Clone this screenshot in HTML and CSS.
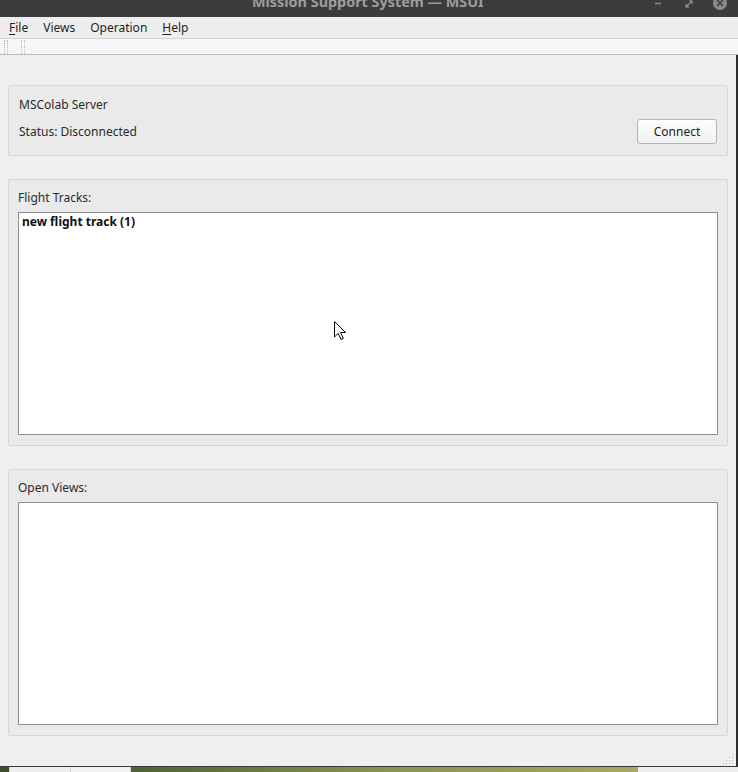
FILE: index.html
```html
<!DOCTYPE html>
<html lang="en">
<head>
  <meta charset="UTF-8" />
  <title>Mission Support System — MSUI</title>
  <link rel="stylesheet" href="styles.css">
</head>
<body>
  <div class="window">
    <div class="titlebar">
      <span class="title">Mission Support System — MSUI</span>
      <svg class="win-btn win-min" width="10" height="8" viewBox="0 0 10 8"><path d="M2 3.5h6" stroke="#8a8a8a" stroke-width="1.5"/></svg>
      <svg class="win-btn win-max" width="12" height="8" viewBox="0 0 12 8"><path d="M3 7l6-6M6 1h3v3M3 4v3h3" stroke="#8a8a8a" stroke-width="1.3" fill="none"/></svg>
      <svg class="win-btn win-close" width="16" height="12" viewBox="0 0 16 12"><circle cx="8" cy="3" r="7" fill="#8a8a8a"/><path d="M5 0l6 6M11 0l-6 6" stroke="#3c3c3c" stroke-width="1.6"/></svg>
    </div>

    <nav class="menubar">
      <span class="menu-item"><u>F</u>ile</span>
      <span class="menu-item">Views</span>
      <span class="menu-item">Operation</span>
      <span class="menu-item"><u>H</u>elp</span>
    </nav>

    <div class="toolbar">
      <span class="handle"></span>
      <span class="handle"></span>
    </div>

    <main class="content">
      <section class="group server-group">
        <div class="server-title">MSColab Server</div>
        <div class="status-row">
          <span>Status: Disconnected</span>
          <button class="btn">Connect</button>
        </div>
      </section>

      <section class="group list-group">
        <div class="group-label">Flight Tracks:</div>
        <ul class="list">
          <li class="list-item active">new flight track (1)</li>
        </ul>
      </section>

      <section class="group list-group">
        <div class="group-label">Open Views:</div>
        <ul class="list"></ul>
      </section>

      <!-- size grip -->
      <svg class="grip" width="12" height="12" viewBox="0 0 12 12" fill="#b4b4b4">
        <rect x="9" y="1" width="1" height="1"/>
        <rect x="6" y="4" width="1" height="1"/><rect x="9" y="4" width="1" height="1"/>
        <rect x="3" y="7" width="1" height="1"/><rect x="6" y="7" width="1" height="1"/><rect x="9" y="7" width="1" height="1"/>
        <rect x="0" y="10" width="1" height="1"/><rect x="3" y="10" width="1" height="1"/><rect x="6" y="10" width="1" height="1"/><rect x="9" y="10" width="1" height="1"/>
      </svg>
    </main>
  </div>

  <div class="desktop">
    <span class="dk dk-edge"></span>
    <span class="dk dk-box"></span>
    <span class="dk dk-light"></span>
    <span class="dk dk-wall"></span>
    <span class="dk dk-right"></span>
  </div>

  <!-- mouse pointer -->
  <svg class="cursor" width="13" height="20" viewBox="0 0 13 20">
    <path d="M0.5 0.5V16L4.2 12.3L7 18.5L9.3 17.5L6.6 11.5H11.5Z" fill="#fff" stroke="#000" stroke-width="1" stroke-linejoin="round"/>
  </svg>
</body>
</html>
```

FILE: styles.css
```css
body {
  margin: 0;
  width: 738px;
  height: 772px;
  overflow: hidden;
  position: relative;
  background: #2c2c2c;
  font-family: "Noto Sans", "DejaVu Sans", sans-serif;
  font-size: 12px;
  color: #2b2b2b;
}

.window {
  display: flex;
  flex-direction: column;
  height: 767px;
  background: #efefef;
  border-bottom: 1px solid #3a3a3a;
  box-sizing: border-box;
}

/* Title bar */
.titlebar {
  height: 17px;
  background: #3c3c3c;
  position: relative;
  overflow: hidden;
  flex-shrink: 0;
}
.title {
  position: absolute;
  left: 252px;
  top: -8px;
  font-size: 14.4px;
  font-weight: 700;
  line-height: 20px;
  color: #9d9d9d;
  white-space: nowrap;
}
.win-btn {
  position: absolute;
  top: 0;
}
.win-min { left: 653px; }
.win-max { left: 683px; }
.win-close { left: 712px; }

/* Menu bar */
.menubar {
  height: 21px;
  display: flex;
  align-items: center;
  padding-left: 9px;
  flex-shrink: 0;
  background: #eeeeee;
  color: #1e1e1e;
}
.menu-item {
  margin-right: 15px;
  line-height: 17px;
}
.menu-item u {
  text-decoration-thickness: 1px;
  text-underline-offset: 2px;
}

/* Toolbar */
.toolbar {
  height: 15px;
  flex-shrink: 0;
  display: flex;
  align-items: stretch;
  padding: 0 0 0 4px;
  gap: 13px;
  background: #f6f6f6;
  border-top: 1px solid #d2d2d2;
  border-bottom: 1px solid #bcbcbc;
}
.handle {
  width: 2px;
  margin-top: 1px;
  border-left: 1px dotted #b8b8b8;
  border-right: 1px dotted #b8b8b8;
}

/* Central widget */
.content {
  flex: 1;
  position: relative;
  display: flex;
  flex-direction: column;
  gap: 23px;
  padding: 30px 8px 0 8px;
  border-right: 2px solid #2f2f2f;
}

.group {
  background: #eaeaea;
  border: 1px solid #d6d6d6;
  border-radius: 2px;
}

.server-group {
  height: 71px;
  box-sizing: border-box;
  padding: 10px 10px 0 10px;
}
.server-title {
  line-height: 17px;
}
.status-row {
  margin-top: 6px;
  display: flex;
  justify-content: space-between;
  align-items: center;
  height: 24px;
}

.btn {
  width: 80px;
  height: 25px;
  font-family: inherit;
  font-size: 12px;
  color: #222;
  background: linear-gradient(#fdfdfd, #f1f1f1);
  border: 1px solid #b5b5b5;
  border-radius: 3px;
  padding: 0;
}

.list-group {
  height: 267px;
  box-sizing: border-box;
  padding: 9px 9px 10px 9px;
  display: flex;
  flex-direction: column;
}
.group-label {
  line-height: 17px;
  margin-bottom: 6px;
}
.list {
  flex: 1;
  margin: 0;
  padding: 0;
  list-style: none;
  background: #ffffff;
  border: 1px solid #8c8c8c;
}
.list-item {
  line-height: 17px;
  padding-left: 3px;
  color: #111;
}
.list-item.active {
  font-weight: 700;
}

.grip {
  position: absolute;
  right: 1px;
  bottom: 1px;
}

/* Desktop peeking below the window */
.desktop {
  display: flex;
  height: 5px;
}
.dk { display: block; height: 100%; }
.dk-edge { width: 9px; background: #3f4d2c; }
.dk-box {
  width: 62px;
  box-sizing: border-box;
  background: #eeeeee;
  border-left: 1px solid #cfcfcf;
  border-right: 1px solid #cfcfcf;
}
.dk-light { width: 59px; background: #f1f1f1; border-right: 1px solid #d6d6d6; }
.dk-wall { width: 507px; background: linear-gradient(90deg, #4f6236, #8a9350 50%, #a7a865); }
.dk-right { flex: 1; background: #ededed; }

.cursor {
  position: absolute;
  left: 334px;
  top: 321px;
}
```
